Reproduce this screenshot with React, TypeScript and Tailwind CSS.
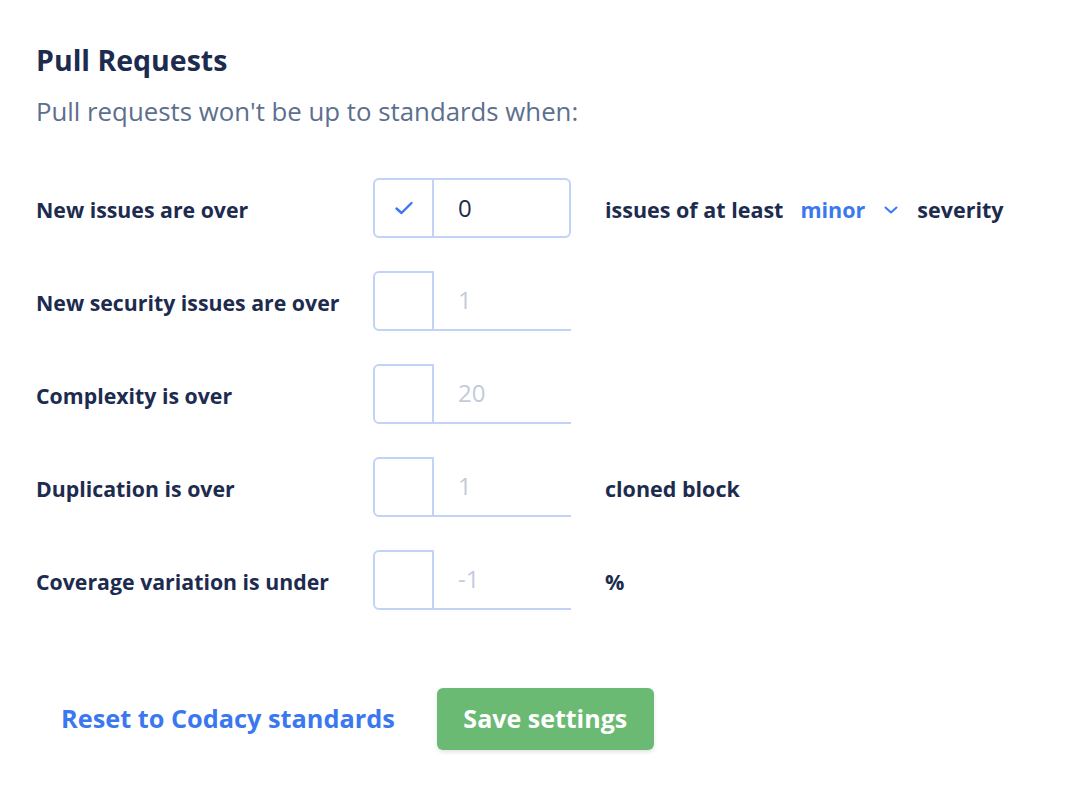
import { useState } from 'react'

type Rule = {
  id: string
  label: string
  value: string
  enabled: boolean
  suffix?: 'severity' | string
}

const rules: Rule[] = [
  { id: 'issues', label: 'New issues are over', value: '0', enabled: true, suffix: 'severity' },
  { id: 'security', label: 'New security issues are over', value: '1', enabled: false },
  { id: 'complexity', label: 'Complexity is over', value: '20', enabled: false },
  { id: 'duplication', label: 'Duplication is over', value: '1', enabled: false, suffix: 'cloned block' },
  { id: 'coverage', label: 'Coverage variation is under', value: '-1', enabled: false, suffix: '%' },
]

function Check() {
  return (
    <svg width="20" height="16" viewBox="0 0 20 16" fill="none">
      <path d="M2.5 8.5l5 4.5L17.5 3" stroke="#3b78f0" strokeWidth="2.4" strokeLinecap="round" strokeLinejoin="round" />
    </svg>
  )
}

function Chevron() {
  return (
    <svg width="16" height="10" viewBox="0 0 16 10" fill="none">
      <path d="M2.5 2.5l5.5 5 5.5-5" stroke="#3b78f0" strokeWidth="2" strokeLinecap="round" strokeLinejoin="round" />
    </svg>
  )
}

function RuleRow({ rule }: { rule: Rule }) {
  const [on, setOn] = useState(rule.enabled)

  return (
    <div className="flex h-[60px] items-center">
      <span className="w-[337px] pt-[4px] text-[21.3px] font-bold text-[#1d2b4f]">{rule.label}</span>
      <div className="flex h-[60px] w-[198px]">
        <button
          type="button"
          onClick={() => setOn(!on)}
          className="flex h-full w-[61px] items-center justify-center rounded-l-[6px] border-[2px] border-[#c3d3f7]"
        >
          {on && <Check />}
        </button>
        <div
          className={`-ml-[1px] flex h-full flex-1 items-center pl-[25px] text-[24px] ${
            on
              ? 'rounded-r-[6px] border-y-[2px] border-r-[2px] border-[#c3d3f7] text-[#1d2b4f]'
              : 'border-b-[2px] border-[#c3d3f7] text-[#c3cbdb]'
          }`}
        >
          {rule.value}
        </div>
      </div>
      {rule.suffix === 'severity' ? (
        <div className="ml-[34px] flex items-center pt-[4px] text-[21.5px] font-bold">
          <span className="text-[#1d2b4f]">issues of at least</span>
          <span className="ml-[17px] text-[#3b78f0]">minor</span>
          <span className="ml-[18px] flex items-center">
            <Chevron />
          </span>
          <span className="ml-[18px] text-[#1d2b4f]">severity</span>
        </div>
      ) : rule.suffix ? (
        <span className="ml-[34px] pt-[4px] text-[21.5px] font-bold text-[#1d2b4f]">{rule.suffix}</span>
      ) : null}
    </div>
  )
}

export default function App() {
  return (
    <div className="min-h-screen bg-white font-['Open_Sans',sans-serif]">
      <div className="px-[36px] pt-[42px]">
        <h2 className="text-[28.5px] font-bold leading-[36px] text-[#1d2b4f]">Pull Requests</h2>
        <p className="mt-[16px] text-[25.8px] leading-[34px] text-[#5d6f8e]">
          Pull requests won't be up to standards when:
        </p>
        <div className="mt-[50px] flex flex-col gap-[33px]">
          {rules.map((r) => (
            <RuleRow key={r.id} rule={r} />
          ))}
        </div>
        <div className="mt-[78px] flex items-center">
          <button type="button" className="ml-[25px] text-[25.3px] font-bold text-[#3b78f0]">
            Reset to Codacy standards
          </button>
          <button
            type="button"
            className="ml-[42px] h-[62px] w-[217px] rounded-[6px] bg-[#6aba74] text-[25px] font-bold text-white shadow-[0_2px_4px_rgba(0,0,0,0.12)]"
          >
            Save settings
          </button>
        </div>
      </div>
    </div>
  )
}
